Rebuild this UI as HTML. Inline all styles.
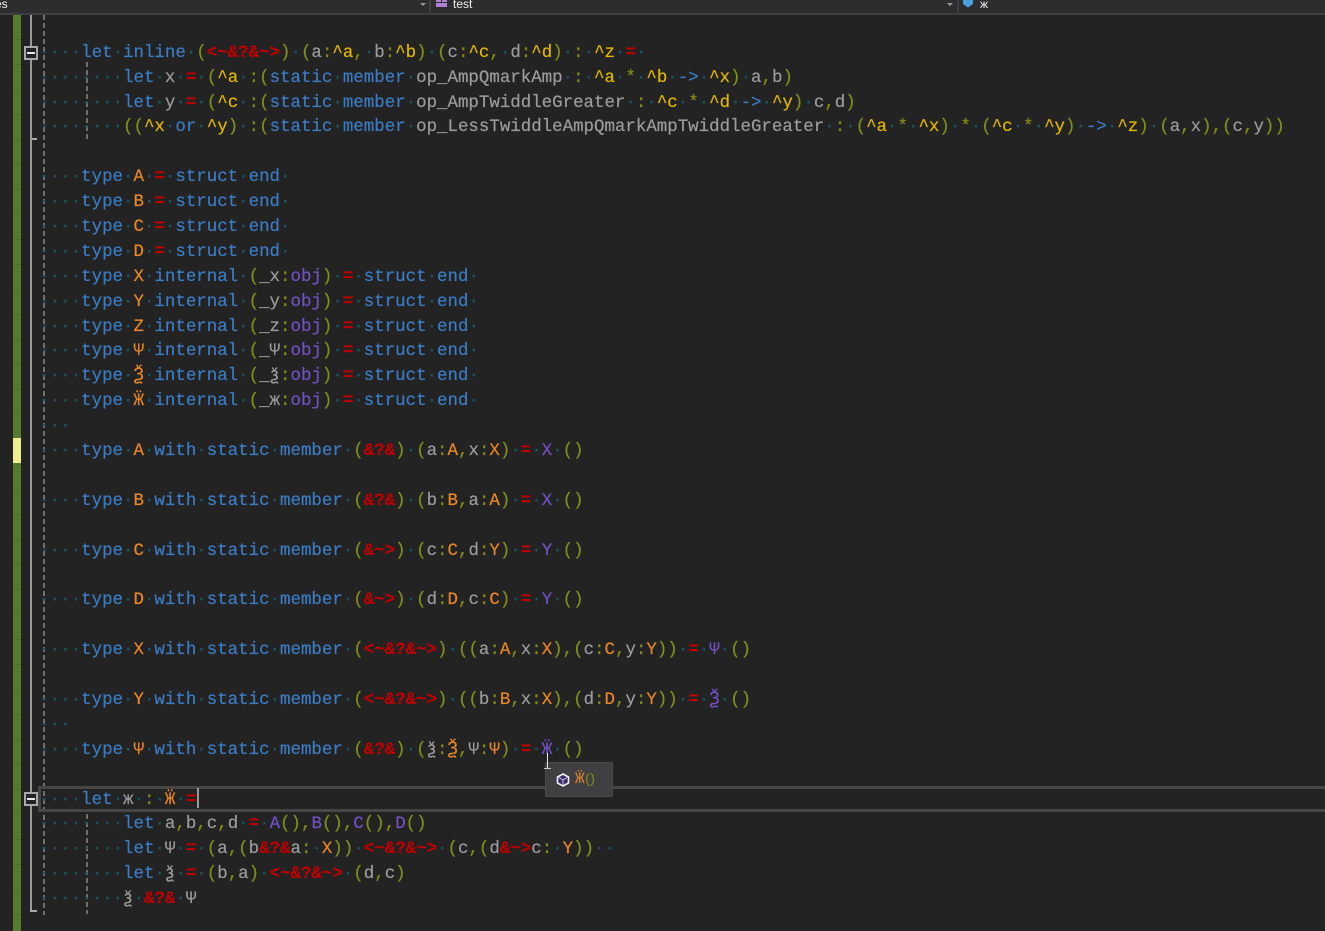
<!DOCTYPE html>
<html><head><meta charset="utf-8">
<style>
html,body{margin:0;padding:0;background:#232323;width:1325px;height:931px;overflow:hidden}
.a{position:absolute}
#code{position:absolute;left:39.3px;top:40.8px;font:17.45px/24.9px "Liberation Mono","DejaVu Sans Mono",monospace;color:#9c9c9c;-webkit-text-stroke:.2px currentColor}
#code div{height:24.9px;white-space:pre}
i{font-style:normal;font-weight:bold;color:#1a5360;-webkit-text-stroke:0}
.k{color:#3b7cc4}.r{color:#c00000;font-weight:bold}.p{color:#7f8f1c}.y{color:#e0b800}.t{color:#e8862a}.v{color:#7350c4}.s{color:#858a18}
.dash{position:absolute;width:2px;background:repeating-linear-gradient(to bottom,#707070 0 5px,transparent 5px 8px)}
.fb{position:absolute;left:24px;width:10px;height:10px;border:2px solid #a8a8a8;background:#232323}
.fb:after{content:"";position:absolute;left:1px;right:1px;top:4px;height:2px;background:#e8e8e8}
</style></head><body>
<div class="a" style="left:0;top:0;width:1325px;height:13px;background:#2d2d30"></div>
<div class="a" style="left:0;top:13px;width:1325px;height:2px;background:#3f3f41"></div>
<div class="a" style="left:429px;top:0;width:2px;height:13px;background:#3f3f41"></div>
<div class="a" style="left:957px;top:0;width:2px;height:13px;background:#3f3f41"></div>
<div class="a" style="left:420px;top:3px;width:0;height:0;border-left:3px solid transparent;border-right:3px solid transparent;border-top:3px solid #999"></div>
<div class="a" style="left:947px;top:3px;width:0;height:0;border-left:3px solid transparent;border-right:3px solid transparent;border-top:3px solid #999"></div>
<div class="a" style="left:-5px;top:-3px;font:12px/14px 'Liberation Sans',sans-serif;color:#f0f0f0">es</div>
<div class="a" style="left:453px;top:-3px;font:12px/14px 'Liberation Sans',sans-serif;color:#f0f0f0">test</div>
<div class="a" style="left:980px;top:-3px;font:12px/14px 'Liberation Sans','DejaVu Sans',sans-serif;color:#f0f0f0">ж</div>
<div class="a" style="left:436px;top:0;width:11px;height:7px;background:#b180d7"></div>
<div class="a" style="left:436px;top:2px;width:11px;height:1px;background:#2d2d30"></div>
<div class="a" style="left:441px;top:0;width:1px;height:2px;background:#2d2d30"></div>
<svg class="a" style="left:962px;top:0" width="12" height="8"><path d="M1 0H11V4L6 7.5L1 4Z" fill="#4aa0e0"/></svg>

<div class="a" style="left:13px;top:15px;width:8px;height:916px;background:repeating-linear-gradient(to bottom,#587a2f 0 24px,#4e6e2a 24px 25px)"></div>
<div class="a" style="left:13px;top:438px;width:8px;height:25px;background:#efef8f"></div>
<div class="a" style="left:30px;top:15px;width:2px;height:895px;background:#9a9a9a"></div>
<div class="a" style="left:30px;top:910px;width:7px;height:2px;background:#a8a8a8"></div>
<div class="a" style="left:32px;top:138px;width:5px;height:2px;background:#a8a8a8"></div>
<div class="dash" style="left:43px;top:15px;height:900px"></div>
<div class="dash" style="left:86px;top:62px;height:80px"></div>
<div class="dash" style="left:86px;top:814px;height:100px"></div>
<div class="a" style="left:38px;top:786px;width:1290px;height:20px;border:3px solid #464646;border-right:0"></div>
<div class="fb" style="top:46px"></div>
<div class="fb" style="top:792px"></div>
<div class="a" style="left:197px;top:788px;width:2px;height:20px;background:#9a9a9a"></div>

<div id="code"><div><i>····</i><span class="k">let</span><i>·</i><span class="k">inline</span><i>·</i><span class="p">(</span><span class="r">&lt;~&amp;?&amp;~&gt;</span><span class="p">)</span><i>·</i><span class="p">(</span>a<span class="s">:</span><span class="y">^a</span><span class="s">,</span><i>·</i>b<span class="s">:</span><span class="y">^b</span><span class="p">)</span><i>·</i><span class="p">(</span>c<span class="s">:</span><span class="y">^c</span><span class="s">,</span><i>·</i>d<span class="s">:</span><span class="y">^d</span><span class="p">)</span><i>·</i><span class="s">:</span><i>·</i><span class="y">^z</span><i>·</i><span class="r">=</span><i>·</i></div>
<div><i>········</i><span class="k">let</span><i>·</i>x<i>·</i><span class="r">=</span><i>·</i><span class="p">(</span><span class="y">^a</span><i>·</i><span class="s">:</span><span class="p">(</span><span class="k">static</span><i>·</i><span class="k">member</span><i>·</i>op_AmpQmarkAmp<i>·</i><span class="s">:</span><i>·</i><span class="y">^a</span><i>·</i><span class="s">*</span><i>·</i><span class="y">^b</span><i>·</i><span class="k">-&gt;</span><i>·</i><span class="y">^x</span><span class="p">)</span><i>·</i>a<span class="s">,</span>b<span class="p">)</span></div>
<div><i>········</i><span class="k">let</span><i>·</i>y<i>·</i><span class="r">=</span><i>·</i><span class="p">(</span><span class="y">^c</span><i>·</i><span class="s">:</span><span class="p">(</span><span class="k">static</span><i>·</i><span class="k">member</span><i>·</i>op_AmpTwiddleGreater<i>·</i><span class="s">:</span><i>·</i><span class="y">^c</span><i>·</i><span class="s">*</span><i>·</i><span class="y">^d</span><i>·</i><span class="k">-&gt;</span><i>·</i><span class="y">^y</span><span class="p">)</span><i>·</i>c<span class="s">,</span>d<span class="p">)</span></div>
<div><i>········</i><span class="p">((</span><span class="y">^x</span><i>·</i><span class="k">or</span><i>·</i><span class="y">^y</span><span class="p">)</span><i>·</i><span class="s">:</span><span class="p">(</span><span class="k">static</span><i>·</i><span class="k">member</span><i>·</i>op_LessTwiddleAmpQmarkAmpTwiddleGreater<i>·</i><span class="s">:</span><i>·</i><span class="p">(</span><span class="y">^a</span><i>·</i><span class="s">*</span><i>·</i><span class="y">^x</span><span class="p">)</span><i>·</i><span class="s">*</span><i>·</i><span class="p">(</span><span class="y">^c</span><i>·</i><span class="s">*</span><i>·</i><span class="y">^y</span><span class="p">)</span><i>·</i><span class="k">-&gt;</span><i>·</i><span class="y">^z</span><span class="p">)</span><i>·</i><span class="p">(</span>a<span class="s">,</span>x<span class="p">)</span><span class="s">,</span><span class="p">(</span>c<span class="s">,</span>y<span class="p">))</span></div>
<div></div>
<div><i>····</i><span class="k">type</span><i>·</i><span class="t">A</span><i>·</i><span class="r">=</span><i>·</i><span class="k">struct</span><i>·</i><span class="k">end</span><i>·</i></div>
<div><i>····</i><span class="k">type</span><i>·</i><span class="t">B</span><i>·</i><span class="r">=</span><i>·</i><span class="k">struct</span><i>·</i><span class="k">end</span><i>·</i></div>
<div><i>····</i><span class="k">type</span><i>·</i><span class="t">C</span><i>·</i><span class="r">=</span><i>·</i><span class="k">struct</span><i>·</i><span class="k">end</span><i>·</i></div>
<div><i>····</i><span class="k">type</span><i>·</i><span class="t">D</span><i>·</i><span class="r">=</span><i>·</i><span class="k">struct</span><i>·</i><span class="k">end</span><i>·</i></div>
<div><i>····</i><span class="k">type</span><i>·</i><span class="t">X</span><i>·</i><span class="k">internal</span><i>·</i><span class="p">(</span>_x<span class="s">:</span><span class="v">obj</span><span class="p">)</span><i>·</i><span class="r">=</span><i>·</i><span class="k">struct</span><i>·</i><span class="k">end</span><i>·</i></div>
<div><i>····</i><span class="k">type</span><i>·</i><span class="t">Y</span><i>·</i><span class="k">internal</span><i>·</i><span class="p">(</span>_y<span class="s">:</span><span class="v">obj</span><span class="p">)</span><i>·</i><span class="r">=</span><i>·</i><span class="k">struct</span><i>·</i><span class="k">end</span><i>·</i></div>
<div><i>····</i><span class="k">type</span><i>·</i><span class="t">Z</span><i>·</i><span class="k">internal</span><i>·</i><span class="p">(</span>_z<span class="s">:</span><span class="v">obj</span><span class="p">)</span><i>·</i><span class="r">=</span><i>·</i><span class="k">struct</span><i>·</i><span class="k">end</span><i>·</i></div>
<div><i>····</i><span class="k">type</span><i>·</i><span class="t">Ψ</span><i>·</i><span class="k">internal</span><i>·</i><span class="p">(</span>_Ψ<span class="s">:</span><span class="v">obj</span><span class="p">)</span><i>·</i><span class="r">=</span><i>·</i><span class="k">struct</span><i>·</i><span class="k">end</span><i>·</i></div>
<div><i>····</i><span class="k">type</span><i>·</i><span class="t">Ѯ</span><i>·</i><span class="k">internal</span><i>·</i><span class="p">(</span>_ѯ<span class="s">:</span><span class="v">obj</span><span class="p">)</span><i>·</i><span class="r">=</span><i>·</i><span class="k">struct</span><i>·</i><span class="k">end</span><i>·</i></div>
<div><i>····</i><span class="k">type</span><i>·</i><span class="t">Ӝ</span><i>·</i><span class="k">internal</span><i>·</i><span class="p">(</span>_ж<span class="s">:</span><span class="v">obj</span><span class="p">)</span><i>·</i><span class="r">=</span><i>·</i><span class="k">struct</span><i>·</i><span class="k">end</span><i>·</i></div>
<div><i>···</i></div>
<div><i>····</i><span class="k">type</span><i>·</i><span class="t">A</span><i>·</i><span class="k">with</span><i>·</i><span class="k">static</span><i>·</i><span class="k">member</span><i>·</i><span class="p">(</span><span class="r">&amp;?&amp;</span><span class="p">)</span><i>·</i><span class="p">(</span>a<span class="s">:</span><span class="t">A</span><span class="s">,</span>x<span class="s">:</span><span class="t">X</span><span class="p">)</span><i>·</i><span class="r">=</span><i>·</i><span class="v">X</span><i>·</i><span class="p">()</span></div>
<div></div>
<div><i>····</i><span class="k">type</span><i>·</i><span class="t">B</span><i>·</i><span class="k">with</span><i>·</i><span class="k">static</span><i>·</i><span class="k">member</span><i>·</i><span class="p">(</span><span class="r">&amp;?&amp;</span><span class="p">)</span><i>·</i><span class="p">(</span>b<span class="s">:</span><span class="t">B</span><span class="s">,</span>a<span class="s">:</span><span class="t">A</span><span class="p">)</span><i>·</i><span class="r">=</span><i>·</i><span class="v">X</span><i>·</i><span class="p">()</span></div>
<div></div>
<div><i>····</i><span class="k">type</span><i>·</i><span class="t">C</span><i>·</i><span class="k">with</span><i>·</i><span class="k">static</span><i>·</i><span class="k">member</span><i>·</i><span class="p">(</span><span class="r">&amp;~&gt;</span><span class="p">)</span><i>·</i><span class="p">(</span>c<span class="s">:</span><span class="t">C</span><span class="s">,</span>d<span class="s">:</span><span class="t">Y</span><span class="p">)</span><i>·</i><span class="r">=</span><i>·</i><span class="v">Y</span><i>·</i><span class="p">()</span></div>
<div></div>
<div><i>····</i><span class="k">type</span><i>·</i><span class="t">D</span><i>·</i><span class="k">with</span><i>·</i><span class="k">static</span><i>·</i><span class="k">member</span><i>·</i><span class="p">(</span><span class="r">&amp;~&gt;</span><span class="p">)</span><i>·</i><span class="p">(</span>d<span class="s">:</span><span class="t">D</span><span class="s">,</span>c<span class="s">:</span><span class="t">C</span><span class="p">)</span><i>·</i><span class="r">=</span><i>·</i><span class="v">Y</span><i>·</i><span class="p">()</span></div>
<div></div>
<div><i>····</i><span class="k">type</span><i>·</i><span class="t">X</span><i>·</i><span class="k">with</span><i>·</i><span class="k">static</span><i>·</i><span class="k">member</span><i>·</i><span class="p">(</span><span class="r">&lt;~&amp;?&amp;~&gt;</span><span class="p">)</span><i>·</i><span class="p">((</span>a<span class="s">:</span><span class="t">A</span><span class="s">,</span>x<span class="s">:</span><span class="t">X</span><span class="p">)</span><span class="s">,</span><span class="p">(</span>c<span class="s">:</span><span class="t">C</span><span class="s">,</span>y<span class="s">:</span><span class="t">Y</span><span class="p">))</span><i>·</i><span class="r">=</span><i>·</i><span class="v">Ψ</span><i>·</i><span class="p">()</span></div>
<div></div>
<div><i>····</i><span class="k">type</span><i>·</i><span class="t">Y</span><i>·</i><span class="k">with</span><i>·</i><span class="k">static</span><i>·</i><span class="k">member</span><i>·</i><span class="p">(</span><span class="r">&lt;~&amp;?&amp;~&gt;</span><span class="p">)</span><i>·</i><span class="p">((</span>b<span class="s">:</span><span class="t">B</span><span class="s">,</span>x<span class="s">:</span><span class="t">X</span><span class="p">)</span><span class="s">,</span><span class="p">(</span>d<span class="s">:</span><span class="t">D</span><span class="s">,</span>y<span class="s">:</span><span class="t">Y</span><span class="p">))</span><i>·</i><span class="r">=</span><i>·</i><span class="v">Ѯ</span><i>·</i><span class="p">()</span></div>
<div><i>···</i></div>
<div><i>····</i><span class="k">type</span><i>·</i><span class="t">Ψ</span><i>·</i><span class="k">with</span><i>·</i><span class="k">static</span><i>·</i><span class="k">member</span><i>·</i><span class="p">(</span><span class="r">&amp;?&amp;</span><span class="p">)</span><i>·</i><span class="p">(</span>ѯ<span class="s">:</span><span class="t">Ѯ</span><span class="s">,</span>Ψ<span class="s">:</span><span class="t">Ψ</span><span class="p">)</span><i>·</i><span class="r">=</span><i>·</i><span class="v">Ӝ</span><i>·</i><span class="p">()</span></div>
<div></div>
<div><i>····</i><span class="k">let</span><i>·</i>ж<i>·</i><span class="s">:</span><i>·</i><span class="t">Ӝ</span><i>·</i><span class="r">=</span></div>
<div><i>········</i><span class="k">let</span><i>·</i>a<span class="s">,</span>b<span class="s">,</span>c<span class="s">,</span>d<i>·</i><span class="r">=</span><i>·</i><span class="v">A</span><span class="p">()</span><span class="s">,</span><span class="v">B</span><span class="p">()</span><span class="s">,</span><span class="v">C</span><span class="p">()</span><span class="s">,</span><span class="v">D</span><span class="p">()</span></div>
<div><i>········</i><span class="k">let</span><i>·</i>Ψ<i>·</i><span class="r">=</span><i>·</i><span class="p">(</span>a<span class="s">,</span><span class="p">(</span>b<span class="r">&amp;?&amp;</span>a<span class="s">:</span><i>·</i><span class="t">X</span><span class="p">))</span><i>·</i><span class="r">&lt;~&amp;?&amp;~&gt;</span><i>·</i><span class="p">(</span>c<span class="s">,</span><span class="p">(</span>d<span class="r">&amp;~&gt;</span>c<span class="s">:</span><i>·</i><span class="t">Y</span><span class="p">))</span><i>··</i></div>
<div><i>········</i><span class="k">let</span><i>·</i>ѯ<i>·</i><span class="r">=</span><i>·</i><span class="p">(</span>b<span class="s">,</span>a<span class="p">)</span><i>·</i><span class="r">&lt;~&amp;?&amp;~&gt;</span><i>·</i><span class="p">(</span>d<span class="s">,</span>c<span class="p">)</span></div>
<div><i>········</i>ѯ<i>·</i><span class="r">&amp;?&amp;</span><i>·</i>Ψ</div>
</div>

<div class="a" style="left:545px;top:762px;width:68px;height:35px;background:#404042;border-radius:2px;box-shadow:0 0 0 1px #4a4a4c inset"></div>
<svg class="a" style="left:556px;top:773px" width="14" height="14" viewBox="0 0 14 14"><path d="M7 1L12.5 4V10L7 13L1.5 10V4Z" fill="#3a2a66" stroke="#f0f0f0" stroke-width="1.6"/><path d="M3 4.6L7 7L11 4.6M7 7V12" fill="none" stroke="#c8b8f0" stroke-width="1"/></svg>
<div class="a" style="left:575px;top:770px;font:16px/19px 'Liberation Mono','DejaVu Sans Mono',monospace;color:#e8862a;letter-spacing:-2px">Ӝ<span style="color:#7f8f1c;font-size:14px;letter-spacing:-4px;margin-left:1px">()</span></div>
<div class="a" style="left:547px;top:753px;width:1px;height:15px;background:#e8e8e8"></div>
<div class="a" style="left:544px;top:768px;width:7px;height:1px;background:#c8c8c8"></div>
</body></html>
